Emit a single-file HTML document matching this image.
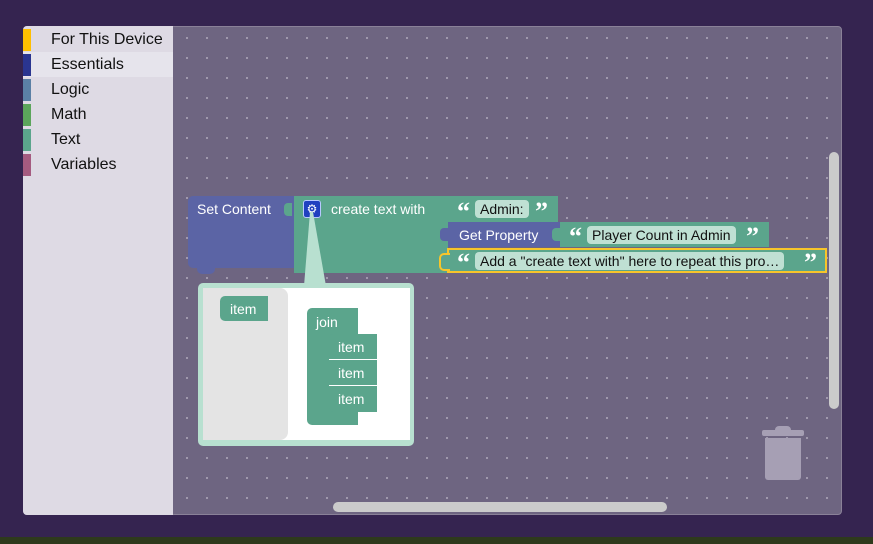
<!DOCTYPE html><html><head><style>
body{margin:0;width:873px;height:544px;overflow:hidden;background:#352450;font-family:"Liberation Sans",sans-serif;position:relative}
.a{position:absolute}
.tb{left:23px;top:26px;width:150px;height:489px;background:#dedae4;border-radius:4px 0 0 4px}
.cat{position:absolute;left:0;width:150px;height:25px;font-size:16px;color:#111;line-height:26px}
.cat span{position:absolute;left:0;top:2px;width:8px;height:22px}
.cat b{font-weight:normal;position:absolute;left:28px}
.g{background:#5ba58c;color:#fff}
.bl{background:#5b64a5;color:#fff}
.t{font-size:14px;line-height:14px;color:#fff}
.fld{position:absolute;background:#bfe0d3;color:#111;border-radius:4px;font-size:14px;height:18px;line-height:18px;padding:0 5px}
.q{position:absolute;color:#fff;font-weight:bold;font-size:26px;line-height:26px;font-family:"Liberation Serif",serif}
</style></head><body>
<div class="a" style="left:0;top:537px;width:873px;height:7px;background:#2e3a1c"></div>
<div class="a" style="left:23px;top:26px;width:819px;height:489px;background:#6e6581;border-radius:4px;border:1px solid #8a8198;box-sizing:border-box"></div>
<svg class="a" style="left:173px;top:27px" width="668" height="487"><defs><pattern id="p" x="12" y="9" width="20" height="20" patternUnits="userSpaceOnUse"><path d="M2 1v2M1 2h2" stroke="#bdb6c8" stroke-width="0.8"/></pattern></defs><rect width="668" height="487" fill="url(#p)"/></svg>
<div class="a tb">
<div class="cat" style="top:1px"><span style="background:#ffbf00"></span><b>For This Device</b></div>
<div class="cat" style="top:26px;background:#e6e4ec"><span style="background:#2a3590"></span><b>Essentials</b></div>
<div class="cat" style="top:51px"><span style="background:#5b80a5"></span><b>Logic</b></div>
<div class="cat" style="top:76px"><span style="background:#5ba55b"></span><b>Math</b></div>
<div class="cat" style="top:101px"><span style="background:#5ba58c"></span><b>Text</b></div>
<div class="cat" style="top:126px"><span style="background:#a55b80"></span><b>Variables</b></div>
</div>
<div class="a bl" style="left:188px;top:196px;width:107px;height:72px;border-radius:5px 0 0 5px"></div>
<div class="a bl" style="left:197px;top:266px;width:18px;height:8px;border-radius:0 0 5px 5px"></div>
<div class="a t" style="left:197px;top:202px">Set Content</div>
<div class="a g" style="left:294px;top:196px;width:154px;height:77px"></div>
<div class="a" style="left:284px;top:203px;width:8px;height:13px;background:#5ba58c;border-radius:4px 0 0 4px"></div>
<div class="a" style="left:303px;top:200px;width:16px;height:16px;background:#2040c0;border:1px solid #b8c8ff;border-radius:3px;color:#fff;font-size:12px;line-height:16px;text-align:center">⚙</div>
<div class="a t" style="left:331px;top:202px">create text with</div>
<div class="a g" style="left:447px;top:196px;width:111px;height:26px"></div>
<div class="q" style="left:457px;top:199px">“</div>
<div class="fld" style="left:475px;top:200px">Admin:</div>
<div class="q" style="left:535px;top:199px">”</div>
<div class="a bl" style="left:448px;top:222px;width:113px;height:25px"></div>
<div class="a" style="left:440px;top:228px;width:8px;height:13px;background:#5b64a5;border-radius:4px 0 0 4px"></div>
<div class="a t" style="left:459px;top:228px">Get Property</div>
<div class="a g" style="left:560px;top:222px;width:209px;height:25px"></div>
<div class="a" style="left:552px;top:228px;width:8px;height:13px;background:#5ba58c;border-radius:4px 0 0 4px"></div>
<div class="q" style="left:569px;top:224px">“</div>
<div class="fld" style="left:587px;top:226px">Player Count in Admin</div>
<div class="q" style="left:746px;top:224px">”</div>
<div class="a g" style="left:447px;top:248px;width:380px;height:25px;border:2px solid #f7c52a;box-sizing:border-box"></div>
<div class="a" style="left:439px;top:253px;width:9px;height:14px;background:#5ba58c;border:2px solid #f7c52a;border-right:none;border-radius:5px 0 0 5px"></div>
<div class="q" style="left:457px;top:250px">“</div>
<div class="fld" style="left:475px;top:252px">Add a "create text with" here to repeat this pro…</div>
<div class="q" style="left:804px;top:250px">”</div>
<svg class="a" style="left:300px;top:212px" width="40" height="76"><polygon points="10,0 13,0 26,74 4,74" fill="#b8e0d0"/></svg>
<div class="a" style="left:198px;top:283px;width:216px;height:163px;background:#b8e0d0;border-radius:5px"></div>
<div class="a" style="left:203px;top:288px;width:207px;height:152px;background:#fff"></div>
<div class="a" style="left:203px;top:288px;width:85px;height:152px;background:#e4e4e4;border-radius:0 8px 8px 0"></div>
<div class="a g" style="left:220px;top:296px;width:48px;height:25px;border-radius:5px 0 0 5px"></div>
<div class="a t" style="left:230px;top:302px">item</div>
<div class="a g" style="left:307px;top:308px;width:51px;height:117px;border-radius:5px 0 0 5px"></div>
<div class="a t" style="left:316px;top:315px">join</div>
<div class="a" style="left:329px;top:334px;width:29px;height:78px;background:#5ba58c"></div>
<div class="a g" style="left:329px;top:334px;width:48px;height:25px;border-radius:4px 0 0 0;border-bottom:1px solid #fff"></div>
<div class="a t" style="left:338px;top:340px">item</div>
<div class="a g" style="left:329px;top:360px;width:48px;height:25px;border-bottom:1px solid #fff"></div>
<div class="a t" style="left:338px;top:366px">item</div>
<div class="a g" style="left:329px;top:386px;width:48px;height:26px;border-radius:0 0 0 4px"></div>
<div class="a t" style="left:338px;top:392px">item</div>
<div class="a" style="left:829px;top:152px;width:10px;height:257px;background:#cbcbcb;border-radius:5px"></div>
<div class="a" style="left:333px;top:502px;width:334px;height:10px;background:#cbcbcb;border-radius:5px"></div>
<div class="a" style="left:762px;top:430px;width:42px;height:6px;background:#a69fb4;border-radius:2px"></div>
<div class="a" style="left:775px;top:426px;width:16px;height:6px;background:#a69fb4;border-radius:4px 4px 0 0"></div>
<div class="a" style="left:765px;top:438px;width:36px;height:42px;background:#a69fb4;border-radius:0 0 3px 3px"></div>
</body></html>
